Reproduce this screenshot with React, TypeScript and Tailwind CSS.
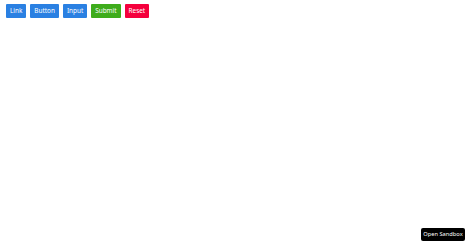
export default function App() {
  const buttons = [
    { label: 'Link', cls: 'bg-[#2a80e2]' },
    { label: 'Button', cls: 'bg-[#2a80e2]' },
    { label: 'Input', cls: 'bg-[#2a80e2]' },
    { label: 'Submit', cls: 'bg-[#3eac1c]' },
    { label: 'Reset', cls: 'bg-[#f5003d]' },
  ]

  return (
    <div className="relative h-[248px] w-[474px] bg-white font-['Noto_Sans',sans-serif]">
      <div className="flex gap-[4px] pl-[6px] pt-[4px]">
        {buttons.map((b) => (
          <button
            key={b.label}
            className={`${b.cls} h-[14px] rounded-[1px] px-[4px] text-[6.4px] leading-[14px] text-white`}
          >
            {b.label}
          </button>
        ))}
      </div>
      {/* Sandbox link */}
      <div className="absolute left-[421px] top-[228px] h-[13px] w-[44px] rounded-[2px] bg-black text-center text-[5.7px] leading-[13px] text-white">
        Open Sandbox
      </div>
    </div>
  )
}
